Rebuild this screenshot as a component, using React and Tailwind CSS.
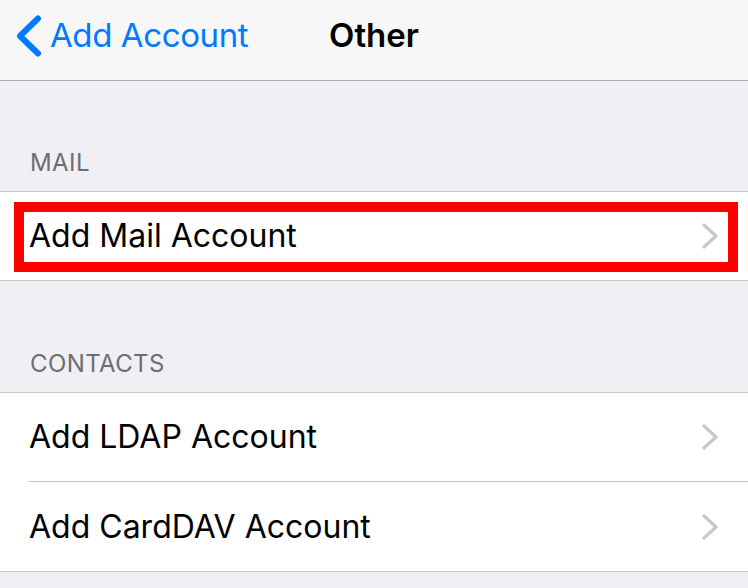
export default function App() {
  const font = { fontFamily: 'Inter, "Liberation Sans", sans-serif' };

  const Chevron = () => (
    <svg width="16" height="26" viewBox="0 0 16 26" fill="none" className="shrink-0">
      <path d="M2 2l12 11L2 24" stroke="#c7c7cc" strokeWidth="3.2" strokeLinecap="round" strokeLinejoin="round" />
    </svg>
  );

  return (
    <div className="w-[748px] h-[588px] overflow-hidden bg-[#efeff4]" style={font}>
      {/* nav bar */}
      <div className="h-[81px] bg-[#f7f7f7] border-b border-[#acacb0] grid grid-cols-[1fr_auto_1fr] items-center pb-[9px]">
        <div className="flex items-center pl-[16px] gap-[8px] text-[#007aff]">
          <svg width="26" height="42" viewBox="0 0 26 42" fill="none" className="shrink-0">
            <path d="M22 3.5L4 21l18 17.5" stroke="#007aff" strokeWidth="6" strokeLinecap="round" strokeLinejoin="round" />
          </svg>
          <span className="text-[33px] leading-none tracking-[-0.4px]">Add Account</span>
        </div>
        <div className="text-[33px] leading-none font-semibold text-black">Other</div>
        <div />
      </div>

      {/* MAIL */}
      <div className="h-[110px] flex items-end px-[30px] pb-[16px]">
        <span className="text-[24px] leading-none tracking-[0.4px] text-[#6d6d72]">MAIL</span>
      </div>
      <div className="bg-white border-y border-[#c8c7cc]">
        <div className="relative h-[88px] flex items-center justify-between pl-[29px] pr-[30px]">
          <span className="text-[32px] leading-none text-black">Add Mail Account</span>
          <Chevron />
          <div className="absolute left-[14px] right-[10px] top-[10px] h-[70px] border-[10px] border-[#ff0000]" />
        </div>
      </div>

      {/* CONTACTS */}
      <div className="h-[111px] flex items-end px-[30px] pb-[16px]">
        <span className="text-[24px] leading-none tracking-[0.4px] text-[#6d6d72]">CONTACTS</span>
      </div>
      <div className="bg-white border-y border-[#c8c7cc]">
        <div className="h-[88px] flex items-center justify-between pl-[29px] pr-[30px]">
          <span className="text-[32px] leading-none text-black">Add LDAP Account</span>
          <Chevron />
        </div>
        <div className="ml-[28px] h-px bg-[#c8c7cc]" />
        <div className="h-[89px] flex items-center justify-between pl-[29px] pr-[30px]">
          <span className="text-[32px] leading-none text-black">Add CardDAV Account</span>
          <Chevron />
        </div>
      </div>
    </div>
  );
}
